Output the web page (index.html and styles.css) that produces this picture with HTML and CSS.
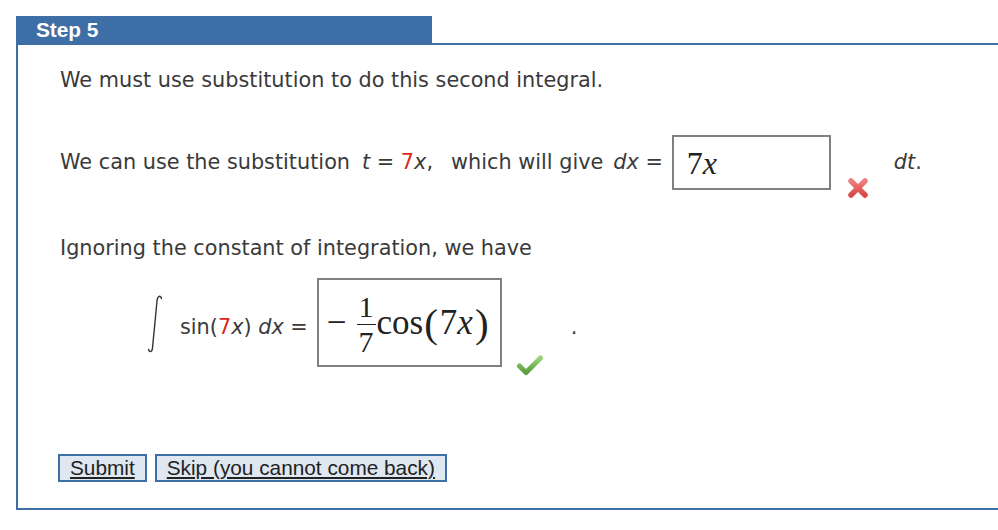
FILE: index.html
```html
<!DOCTYPE html>
<html>
<head>
<meta charset="utf-8">
<link rel="stylesheet" href="styles.css">
</head>
<body>
<div class="step">
  <div class="step-head"><div class="tab">Step 5</div></div>
  <div class="step-body">
    <p class="line l1">We must use substitution to do this second integral.</p>
    <div class="row r2">
      <span class="txt">We can use the substitution</span>
      <span class="m m1"><i>t</i> = <span class="red">7</span><i>x</i>,</span>
      <span class="txt">which will give</span>
      <span class="m m2"><i>dx</i> =</span>
      <span class="ans ans1"><span class="mj">7<i>x</i></span></span>
      <span class="mark xmark"><svg width="22" height="22" viewBox="0 0 22 22"><defs><linearGradient id="gx" x1="0" y1="0" x2="0" y2="1"><stop offset="0" stop-color="#f08080"/><stop offset="1" stop-color="#d94848"/></linearGradient></defs><path d="M4 4 L18 18 M18 4 L4 18" stroke="url(#gx)" stroke-width="5.5" stroke-linecap="round"/></svg></span>
      <span class="m dt"><i>dt</i>.</span>
    </div>
    <p class="line l3">Ignoring the constant of integration, we have</p>
    <div class="row r4">
      <span class="integral"><svg width="16" height="60" viewBox="0 0 16 60"><path d="M1.5 55.5 C2.5 58.5 5 58.5 5.5 54 L10 7 C10.6 1.5 13.5 1 14.5 4.5" fill="none" stroke="#333" stroke-width="1.4" stroke-linecap="round"/></svg></span>
      <span class="m sin">sin(<span class="red">7</span><i>x</i>) <i>dx</i> =</span>
      <span class="ans ans2">
        <span class="mj big">
          <span class="minus">−</span>
          <span class="frac"><span class="num">1</span><span class="den">7</span></span><span class="cos">cos</span><span class="paren">(</span><span class="arg">7<i>x</i></span><span class="paren">)</span>
        </span>
      </span>
      <span class="mark ok"><svg width="28" height="22" viewBox="0 0 28 22"><defs><linearGradient id="gk" x1="0" y1="0" x2="0" y2="1"><stop offset="0" stop-color="#9ad27a"/><stop offset="1" stop-color="#5a9e3e"/></linearGradient></defs><path d="M3.5 12 L10 18.5 L24.5 4" fill="none" stroke="url(#gk)" stroke-width="5" stroke-linecap="round" stroke-linejoin="round"/></svg></span>
      <span class="m dot">.</span>
    </div>
    <div class="buttons">
      <button class="btn">Submit</button>
      <button class="btn">Skip (you cannot come back)</button>
    </div>
  </div>
</div>
</body>
</html>
```

FILE: styles.css
```css
html, body { margin: 0; padding: 0; background: #fff; }
body { font-family: "DejaVu Sans", Verdana, sans-serif; color: #3a3a3a; }
.step { margin: 16px 0 0 16px; width: 982px; border-left: 2px solid #3e6ea6; box-sizing: border-box; }
.step-head { border-bottom: 2px solid #3e6ea6; margin-left: -2px; }
.tab { width: 416px; height: 27px; background: #3e6ea6; color: #fff; font-family: "Liberation Sans", Arial, sans-serif; font-weight: bold; font-size: 20.8px; line-height: 27px; padding-left: 20px; box-sizing: border-box; }
.step-body { border-bottom: 2px solid #3e6ea6; padding: 22px 0 26px 42px; }
.line { margin: 0; font-size: 20.8px; line-height: 26px; }
.row { display: flex; align-items: flex-start; }
.r2 { margin-top: 42px; height: 63px; }
.r2 .txt, .r2 .m { font-size: 20.8px; line-height: 26px; margin-top: 14px; white-space: nowrap; }
.m1 { margin-left: 12px; margin-right: 18px; }
.m2 { margin-left: 10px; margin-right: 9px; }
.red { color: #e0281e; }
.ans { border: 2px solid #808080; box-sizing: border-box; display: flex; align-items: flex-start; }
.ans1 { width: 159px; height: 55px; }
.mj { font-family: "Liberation Serif", "Times New Roman", serif; color: #222; }
.ans1 .mj { font-size: 32px; margin: 9px 0 0 13px; line-height: 34px; }
.xmark { margin: 42px 0 0 16px; }
.r2 .dt { margin-left: 25px; }
.l3 { margin-top: 37px; }
.r4 { margin-top: 17px; height: 176px; }
.integral { margin: 16px 0 0 87px; line-height: 0; }
.sin { margin: 36px 9px 0 17px; font-size: 20.8px; line-height: 26px; white-space: nowrap; }
.ans2 { width: 185px; height: 89px; }
.big { font-size: 35px; line-height: 40px; display: flex; align-items: center; margin: 0 0 0 8px; height: 85px; white-space: nowrap; }
.minus { margin-right: 10px; }
.frac { display: inline-flex; flex-direction: column; align-items: center; font-size: 30px; line-height: 34px; margin: 0 1px 0 0; }
.num { display: block; height: 34px; border-bottom: 1px solid #222; padding: 0 2px; margin-bottom: -3px; }
.den { display: block; height: 34px; margin-top: 3px; margin-bottom: -3px; }
.paren { font-size: 41px; display: inline-block; margin: 0 1px; }
.arg { margin: 0 1px; }
.ok { margin: 76px 0 0 14px; }
.dot { margin: 36px 0 0 27px; font-size: 20.8px; line-height: 26px; }
.buttons { display: flex; gap: 8px; margin-left: -2px; }
.btn { font-family: "Liberation Sans", Arial, sans-serif; font-size: 20.8px; color: #222; text-decoration: underline; background: #dfe7f0; border: 2px solid #3e6ea6; height: 28px; box-sizing: border-box; padding: 0 10px; line-height: 22px; border-radius: 0; }
```
